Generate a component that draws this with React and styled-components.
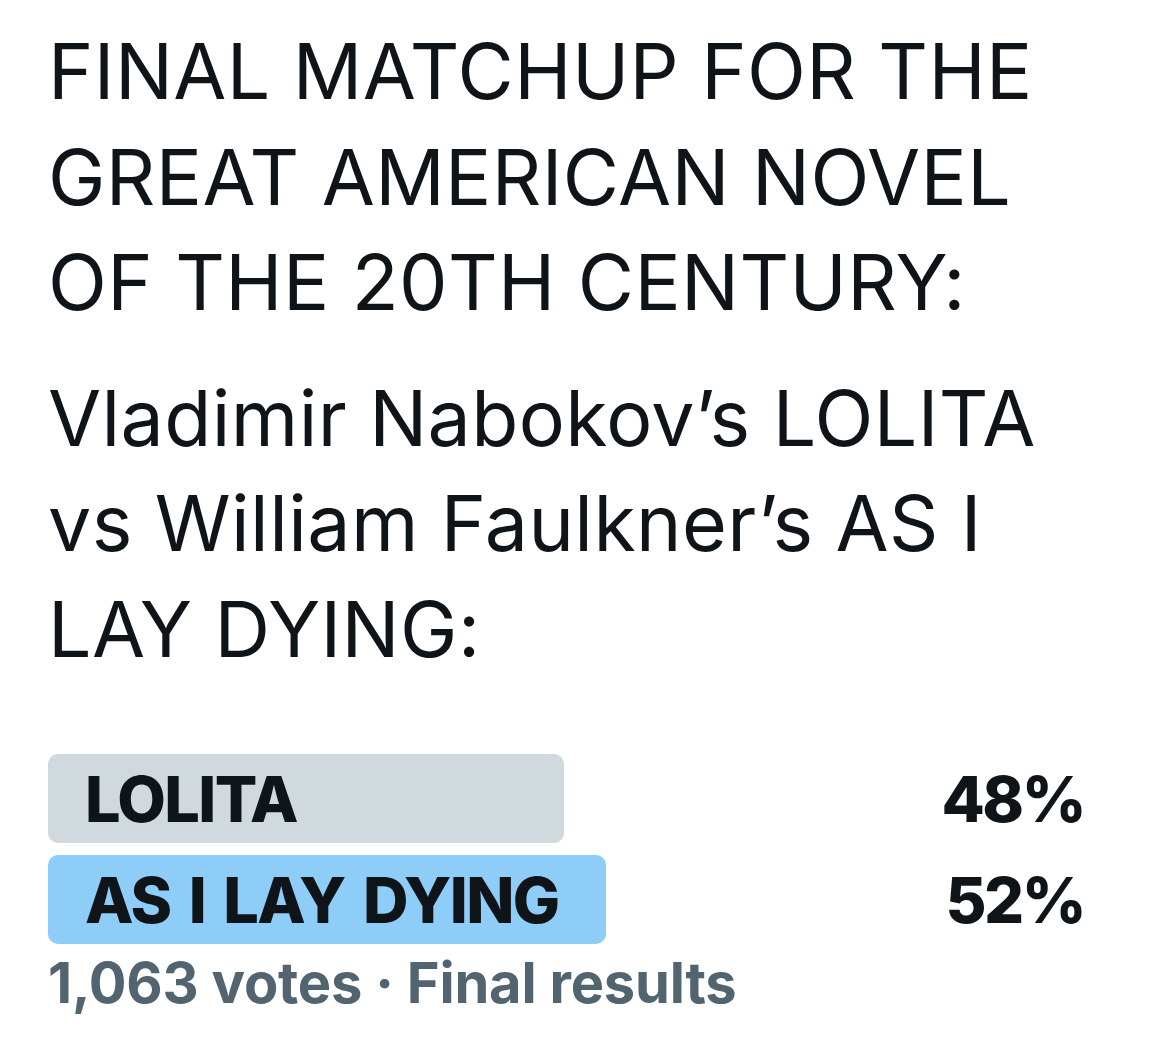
import React from "react";
import styled, { createGlobalStyle } from "styled-components";

const GlobalStyle = createGlobalStyle`
    html, body {
        margin: 0;
        padding: 0;
        background: #ffffff;
    }
    body {
        font-family: Inter, "Liberation Sans", sans-serif;
        color: #0f1419;
    }
`;

const Page = styled.div`
    width: 1170px;
    height: 1042px;
    box-sizing: border-box;
    padding: 19px 86px 0 48px;
    overflow: hidden;
`;

const Paragraph = styled.p`
    margin: 0 0 ${props => props.gap}px 0;
    font-size: 77px;
    line-height: 105.5px;
    font-weight: 400;
    letter-spacing: 0.4px;
    white-space: nowrap;
`;

// poll
const Poll = styled.div`
    display: flex;
    flex-direction: column;
    gap: 12px;
`;

const Choice = styled.div`
    display: flex;
    align-items: center;
    justify-content: space-between;
    height: 89px;
`;

const Bar = styled.div`
    height: 100%;
    display: flex;
    align-items: center;
    box-sizing: border-box;
    padding-left: 37px;
    border-radius: 10px;
    background: ${props => (props.winner ? "#8ecdf8" : "#cfd9de")};
    white-space: nowrap;
`;

const Label = styled.span`
    font-size: 63px;
    font-weight: 800;
    letter-spacing: -1.6px;
    word-spacing: 6px;
`;

const Percent = styled.span`
    font-size: 63px;
    font-weight: 800;
    letter-spacing: -2.5px;
`;

const Footer = styled.div`
    margin-top: 6px;
    font-size: 56px;
    line-height: 66px;
    font-weight: 700;
    color: #536471;
    letter-spacing: -0.2px;
`;

const choices = [
    { label: "LOLITA", pct: 48 },
    { label: "AS I LAY DYING", pct: 52, winner: true },
];

export default function App() {
    return (
        <>
            <GlobalStyle />
            <Page>
                <Paragraph gap={30}>
                    FINAL MATCHUP FOR THE<br />
                    GREAT AMERICAN NOVEL<br />
                    OF THE 20TH CENTURY:
                </Paragraph>
                <Paragraph gap={72}>
                    Vladimir Nabokov’s LOLITA<br />
                    vs William Faulkner’s AS I<br />
                    LAY DYING:
                </Paragraph>

                <Poll>
                    {choices.map(c => (
                        <Choice key={c.label}>
                            <Bar winner={c.winner} style={{ width: `${c.pct * 10.74}px` }}>
                                <Label>{c.label}</Label>
                            </Bar>
                            <Percent>{c.pct}%</Percent>
                        </Choice>
                    ))}
                </Poll>
                <Footer>1,063 votes · Final results</Footer>
            </Page>
        </>
    );
}
